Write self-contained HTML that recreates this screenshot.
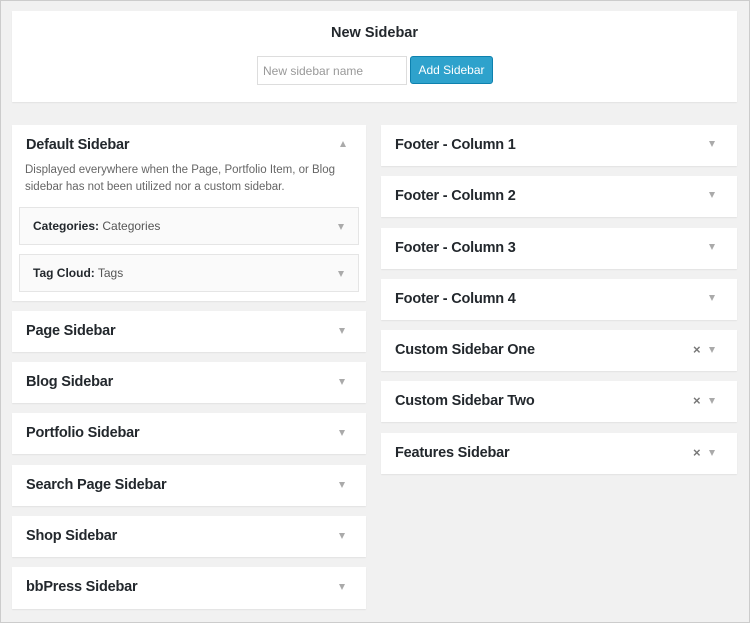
<!DOCTYPE html>
<html><head><style>
*{box-sizing:border-box;margin:0;padding:0}
body{width:750px;height:623px;background:#f1f1f1;font-family:"Liberation Sans",sans-serif;position:relative;overflow:hidden}
.fr{position:absolute;left:0;top:0;width:750px;height:623px;border:1px solid #ccc}
.p{position:absolute;background:#fff;box-shadow:0 1px 1px rgba(0,0,0,.06)}
.t{position:absolute;left:14px;font-size:14.5px;font-weight:bold;color:#23282d;letter-spacing:-0.2px}
.a{position:absolute;width:0;height:0;border-left:3.5px solid transparent;border-right:3.5px solid transparent;border-top:6px solid #aaa}
.x{position:absolute;font-size:13px;color:#777;font-weight:bold}
.s{position:absolute;left:7px;width:340px;height:38px;background:#fafafa;border:1px solid #e5e5e5;font-size:12px;color:#555;padding:11px 13px}
</style></head><body>
<div class="fr"></div>
<div class="p" style="left:12px;top:11px;width:725px;height:91px">
<div style="position:absolute;left:0;right:0;top:14px;text-align:center;font-size:14.5px;font-weight:bold;color:#23282d">New Sidebar</div>
<div style="position:absolute;left:245px;top:45px;width:150px;height:29px;border:1px solid #ddd;font-size:12px;color:#999;padding:7px 5px">New sidebar name</div>
<div style="position:absolute;left:398px;top:45px;width:83px;height:28px;background:#2ea2cc;border:1px solid #0e81ae;border-radius:3px;color:#fff;font-size:12px;text-align:center;line-height:26px">Add Sidebar</div>
</div>

<div class="p" style="left:12px;top:125px;width:354px;height:176px">
<div class="t" style="top:12px">Default Sidebar</div>
<div class="a" style="left:328px;top:16px;border-top:0;border-bottom:6px solid #aaa"></div>
<div style="position:absolute;left:13px;top:37px;width:330px;font-size:11.5px;line-height:17px;color:#666">Displayed everywhere when the Page, Portfolio Item, or Blog sidebar has not been utilized nor a custom sidebar.</div>
<div class="s" style="top:82px"><b style="color:#23282d">Categories:</b> Categories<div class="a" style="left:318px;top:16px"></div></div>
<div class="s" style="top:129px"><b style="color:#23282d">Tag Cloud:</b> Tags<div class="a" style="left:318px;top:16px"></div></div>
</div>

<div class="p" style="left:12px;top:311px;width:354px;height:41px"><div class="t" style="top:12px">Page Sidebar</div><div class="a" style="left:327px;top:17px"></div></div>
<div class="p" style="left:12px;top:362px;width:354px;height:41px"><div class="t" style="top:12px">Blog Sidebar</div><div class="a" style="left:327px;top:17px"></div></div>
<div class="p" style="left:12px;top:413px;width:354px;height:41px"><div class="t" style="top:12px">Portfolio Sidebar</div><div class="a" style="left:327px;top:17px"></div></div>
<div class="p" style="left:12px;top:465px;width:354px;height:41px"><div class="t" style="top:12px">Search Page Sidebar</div><div class="a" style="left:327px;top:17px"></div></div>
<div class="p" style="left:12px;top:516px;width:354px;height:41px"><div class="t" style="top:12px">Shop Sidebar</div><div class="a" style="left:327px;top:17px"></div></div>
<div class="p" style="left:12px;top:567px;width:354px;height:42px"><div class="t" style="top:12px">bbPress Sidebar</div><div class="a" style="left:327px;top:17px"></div></div>

<div class="p" style="left:381px;top:125px;width:356px;height:41px"><div class="t" style="top:12px">Footer - Column 1</div><div class="a" style="left:328px;top:16px"></div></div>
<div class="p" style="left:381px;top:176px;width:356px;height:41px"><div class="t" style="top:12px">Footer - Column 2</div><div class="a" style="left:328px;top:16px"></div></div>
<div class="p" style="left:381px;top:228px;width:356px;height:41px"><div class="t" style="top:12px">Footer - Column 3</div><div class="a" style="left:328px;top:16px"></div></div>
<div class="p" style="left:381px;top:279px;width:356px;height:41px"><div class="t" style="top:12px">Footer - Column 4</div><div class="a" style="left:328px;top:16px"></div></div>
<div class="p" style="left:381px;top:330px;width:356px;height:41px"><div class="t" style="top:12px">Custom Sidebar One</div><div class="x" style="left:312px;top:12px">×</div><div class="a" style="left:328px;top:17px"></div></div>
<div class="p" style="left:381px;top:381px;width:356px;height:41px"><div class="t" style="top:12px">Custom Sidebar Two</div><div class="x" style="left:312px;top:12px">×</div><div class="a" style="left:328px;top:17px"></div></div>
<div class="p" style="left:381px;top:433px;width:356px;height:41px"><div class="t" style="top:12px">Features Sidebar</div><div class="x" style="left:312px;top:12px">×</div><div class="a" style="left:328px;top:17px"></div></div>
</body></html>
